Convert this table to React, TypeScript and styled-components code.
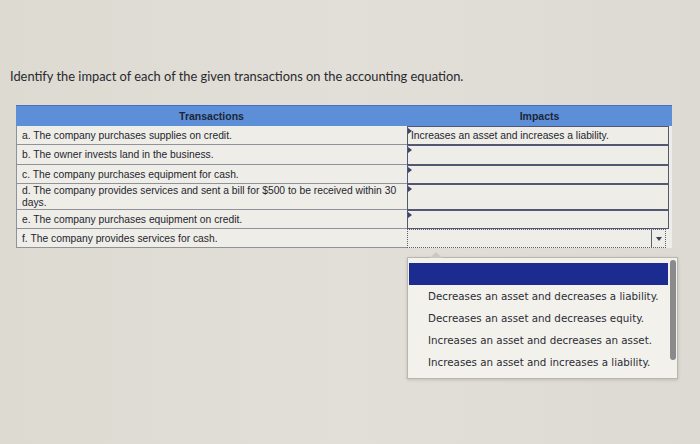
import React from "react";
import styled, { createGlobalStyle } from "styled-components";

const GlobalStyle = createGlobalStyle`
  html, body { margin: 0; padding: 0; }
  body {
    background: linear-gradient(90deg, #dcdad1 0%, #e2dfd8 50%, #dcdad2 100%);
    width: 700px;
    height: 444px;
    overflow: hidden;
    font-family: "Liberation Sans", Arial, sans-serif;
  }
`;

const Page = styled.div`
  padding: 68px 0 0 10px;
`;

const Title = styled.div`
  font-family: Lato, "Open Sans", sans-serif;
  font-size: 12.85px;
  line-height: 17px;
  color: #2a2a2e;
`;

const Table = styled.div`
  margin: 20px 0 0 6px;
  width: 656px;
  display: grid;
  grid-template-columns: 391px 265px;
`;

const HeaderCell = styled.div`
  height: 20px;
  background: #5c8fd7;
  border-top: 1px solid #4473bb;
  display: flex;
  align-items: center;
  justify-content: center;
  font-weight: bold;
  font-size: 10.5px;
  color: #1d2636;
`;

const TxCell = styled.div<{ $tall?: boolean }>`
  min-height: ${(p) => (p.$tall ? 23.5 : 17.4)}px;
  background: #eeede7;
  border-left: 1px solid #8f919b;
  border-bottom: 1px solid #8f919b;
  padding: 1px 4px 0 5px;
  font-size: 10.3px;
  line-height: 11.5px;
  color: #25252e;
  display: flex;
  align-items: ${(p) => (p.$tall ? "flex-start" : "center")};
`;

const ImpactCell = styled.div`
  display: flex;
  background: #eeede7;
  position: relative;
`;

const Input = styled.div`
  flex: 1;
  margin-right: 3px;
  border: 1.5px solid #535872;
  padding: 0 3px;
  font-size: 10.3px;
  display: flex;
  align-items: center;
  color: #25252e;
  position: relative;
  &::before {
    content: "";
    position: absolute;
    left: 0;
    top: 1px;
    border-top: 3px solid transparent;
    border-bottom: 3px solid transparent;
    border-left: 4px solid #3d4466;
  }
`;

const Select = styled.div`
  flex: 1;
  margin-right: 6px;
  border: 1.5px dotted #5d6070;
  display: flex;
  justify-content: flex-end;
  position: relative;
`;

const SelectButton = styled.div`
  width: 13px;
  border-left: 1px solid #5d6070;
  display: flex;
  align-items: center;
  justify-content: center;
  &::after {
    content: "";
    border-left: 3.5px solid transparent;
    border-right: 3.5px solid transparent;
    border-top: 4px solid #3b4058;
  }
`;

const Popup = styled.div`
  position: absolute;
  top: calc(100% + 10px);
  left: -1px;
  width: 271px;
  box-sizing: border-box;
  padding: 5px 9px 6px 1px;
  background: #f2f1ec;
  border: 1px solid #b7b6b0;
  box-shadow: 0 1px 3px rgba(0, 0, 0, 0.15);
  z-index: 2;
  &::before {
    content: "";
    position: absolute;
    top: -6px;
    left: 22px;
    border-left: 6px solid transparent;
    border-right: 6px solid transparent;
    border-bottom: 6px solid #c9c8c2;
  }
`;

const Option = styled.div<{ $selected?: boolean }>`
  height: 21.8px;
  display: flex;
  align-items: center;
  padding-left: 19px;
  font-family: "DejaVu Sans", Verdana, sans-serif;
  font-size: 10.3px;
  color: #2c2c34;
  white-space: nowrap;
  background: ${(p) => (p.$selected ? "#1c2b8f" : "transparent")};
`;

const Scrollbar = styled.div`
  position: absolute;
  right: 1px;
  top: 2px;
  width: 6px;
  height: 100px;
  border-radius: 3px;
  background: #8a8a8c;
`;

const rows = [
  { t: "a. The company purchases supplies on credit.", v: "Increases an asset and increases a liability." },
  { t: "b. The owner invests land in the business.", v: "" },
  { t: "c. The company purchases equipment for cash.", v: "" },
  { t: "d. The company provides services and sent a bill for $500 to be received within 30 days.", v: "", tall: true },
  { t: "e. The company purchases equipment on credit.", v: "" },
];

const options = [
  "Decreases an asset and decreases a liability.",
  "Decreases an asset and decreases equity.",
  "Increases an asset and decreases an asset.",
  "Increases an asset and increases a liability.",
];

export default function App() {
  return (
    <>
      <GlobalStyle />
      <Page>
        <Title>Identify the impact of each of the given transactions on the accounting equation.</Title>
        <Table>
          <HeaderCell>Transactions</HeaderCell>
          <HeaderCell>Impacts</HeaderCell>
          {rows.map((r) => (
            <React.Fragment key={r.t}>
              <TxCell $tall={r.tall}>{r.t}</TxCell>
              <ImpactCell>
                <Input>{r.v}</Input>
              </ImpactCell>
            </React.Fragment>
          ))}
          <TxCell>f. The company provides services for cash.</TxCell>
          <ImpactCell>
            <Select>
              <SelectButton />
              <Popup>
                <Option $selected />
                {options.map((o) => (
                  <Option key={o}>{o}</Option>
                ))}
                <Scrollbar />
              </Popup>
            </Select>
          </ImpactCell>
        </Table>
      </Page>
    </>
  );
}
